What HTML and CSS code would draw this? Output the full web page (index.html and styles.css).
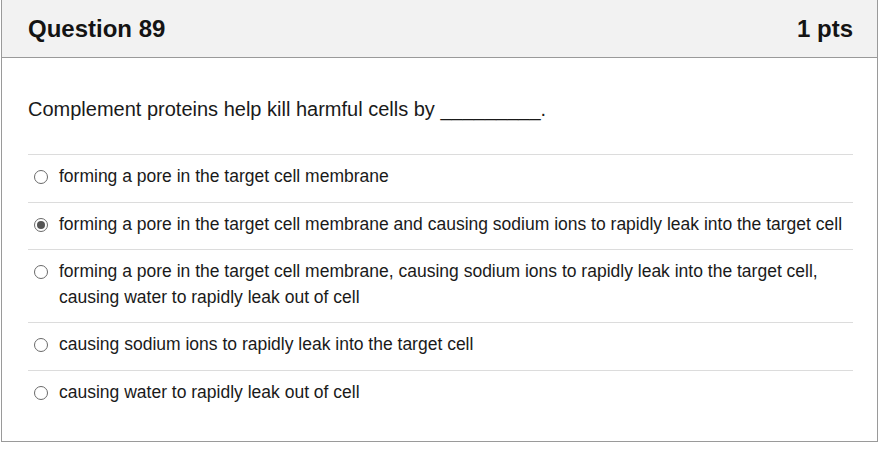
FILE: index.html
```html
<!DOCTYPE html>
<html lang="en">
<head>
<meta charset="utf-8">
<title>Question 89</title>
<link rel="stylesheet" href="styles.css">
</head>
<body>
<div class="quiz">
  <div class="quiz-header">
    <span class="title">Question 89</span>
    <span class="points">1 pts</span>
  </div>
  <div class="quiz-body">
    <p class="question">Complement proteins help kill harmful cells by _________.</p>
    <div class="answers">
      <div class="answer"><span class="radio"></span><span class="label">forming a pore in the target cell membrane</span></div>
      <div class="answer"><span class="radio checked"></span><span class="label">forming a pore in the target cell membrane and causing sodium ions to rapidly leak into the target cell</span></div>
      <div class="answer"><span class="radio"></span><span class="label">forming a pore in the target cell membrane, causing sodium ions to rapidly leak into the target cell, causing water to rapidly leak out of cell</span></div>
      <div class="answer"><span class="radio"></span><span class="label">causing sodium ions to rapidly leak into the target cell</span></div>
      <div class="answer"><span class="radio"></span><span class="label">causing water to rapidly leak out of cell</span></div>
    </div>
  </div>
</div>
</body>
</html>
```
FILE: styles.css
```css
html, body {
  margin: 0;
  padding: 0;
  background: #ffffff;
}
body {
  font-family: "Liberation Sans", Arial, sans-serif;
  color: #1a1a1a;
}
.quiz {
  box-sizing: border-box;
  width: 877px;
  margin: -1px 0 0 1px;
  border: 1px solid #9a9a9a;
}
.quiz-header {
  box-sizing: border-box;
  height: 58px;
  background: #f2f2f2;
  border-bottom: 1px solid #9a9a9a;
  display: flex;
  align-items: center;
  justify-content: space-between;
  padding: 0 24px 0 26px;
  font-size: 24px;
  font-weight: bold;
  color: #141414;
}
.quiz-body {
  padding: 37px 24px 24px 26px;
}
.question {
  margin: 0;
  font-size: 20px;
  line-height: 28px;
}
.answers {
  margin-top: 31px;
}
.answer {
  display: flex;
  align-items: flex-start;
  border-top: 1px solid #dcdcdc;
  padding: 9px 0 12px 0;
  font-size: 17.5px;
  line-height: 25.5px;
}
.radio {
  box-sizing: border-box;
  flex: none;
  width: 14px;
  height: 14px;
  margin: 6px 11px 0 6px;
  border: 1px solid #6a6a6a;
  border-radius: 50%;
  background: #fff;
  position: relative;
}
.radio.checked::after {
  content: "";
  position: absolute;
  left: 2px;
  top: 2px;
  width: 8px;
  height: 8px;
  border-radius: 50%;
  background: #555;
}
.label {
  flex: 1;
}
```
